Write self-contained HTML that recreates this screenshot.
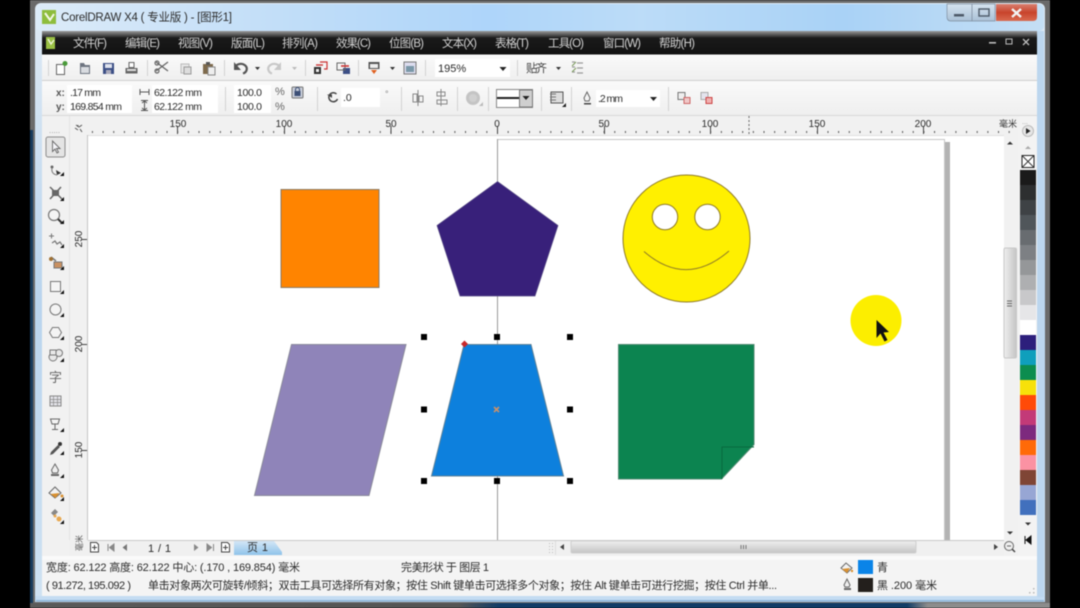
<!DOCTYPE html>
<html><head><meta charset="utf-8"><title>CorelDRAW X4</title>
<style>
html,body{margin:0;padding:0;background:#000;width:1080px;height:608px;overflow:hidden}
svg{display:block;filter:blur(.5px)}
text{font-family:"Liberation Sans","Noto Sans CJK SC",sans-serif;font-size:11px;fill:#2a2a2a}
.m text{fill:#d2d2d2;font-size:11.5px}
.i{fill:none;stroke:#555;stroke-width:1.2}
</style></head><body>
<svg width="1080" height="608" viewBox="0 0 1080 608" xmlns="http://www.w3.org/2000/svg">
<defs>
<linearGradient id="tb" x1="0" x2="1" y1="0" y2="0"><stop offset="0" stop-color="#dcebf8"/><stop offset=".2" stop-color="#c6e0f8"/><stop offset=".45" stop-color="#aed5fa"/><stop offset=".6" stop-color="#bcdcf8"/><stop offset=".8" stop-color="#a9d2f6"/><stop offset="1" stop-color="#c5dff5"/></linearGradient>
<linearGradient id="mb" x1="0" x2="0" y1="0" y2="1"><stop offset="0" stop-color="#999"/><stop offset=".3" stop-color="#1a1a1a"/><stop offset="1" stop-color="#121212"/></linearGradient>
<linearGradient id="tbar" x1="0" x2="0" y1="0" y2="1"><stop offset="0" stop-color="#fafafa"/><stop offset="1" stop-color="#efefef"/></linearGradient>
<linearGradient id="cl" x1="0" x2="0" y1="0" y2="1"><stop offset="0" stop-color="#d98070"/><stop offset=".5" stop-color="#c9442c"/><stop offset="1" stop-color="#d86a50"/></linearGradient>
<linearGradient id="btn" x1="0" x2="0" y1="0" y2="1"><stop offset="0" stop-color="#d6e4f0"/><stop offset="1" stop-color="#a9c0d6"/></linearGradient>
<linearGradient id="thumbH" x1="0" x2="0" y1="0" y2="1"><stop offset="0" stop-color="#efefef"/><stop offset="1" stop-color="#c4c4c4"/></linearGradient>
<linearGradient id="thumbV" x1="0" x2="1" y1="0" y2="0"><stop offset="0" stop-color="#efefef"/><stop offset="1" stop-color="#c4c4c4"/></linearGradient>
<linearGradient id="tab" x1="0" x2="0" y1="0" y2="1"><stop offset="0" stop-color="#d3e6f6"/><stop offset="1" stop-color="#8fc3ea"/></linearGradient>
<linearGradient id="bot" x1="0" x2="1" y1="0" y2="0"><stop offset="0" stop-color="#5a5a5a"/><stop offset=".42" stop-color="#555"/><stop offset=".46" stop-color="#123c66"/><stop offset=".86" stop-color="#123c66"/><stop offset=".88" stop-color="#8c8c8c"/><stop offset="1" stop-color="#8c8c8c"/></linearGradient>
<linearGradient id="side" x1="0" x2="0" y1="0" y2="1"><stop offset="0" stop-color="#dfeaf4"/><stop offset=".5" stop-color="#b9d4ee"/><stop offset="1" stop-color="#cfe2f2"/></linearGradient>
<pattern id="hm" x="497" y="0" width="10.66" height="10" patternUnits="userSpaceOnUse"><rect x="0" y="1" width="1" height="2" fill="#555"/></pattern>
<pattern id="vm" x="0" y="344" width="10" height="10.56" patternUnits="userSpaceOnUse"><rect x="1" y="0" width="2" height="1" fill="#555"/></pattern>
</defs>

<!-- outer frame -->
<rect x="0" y="0" width="1080" height="608" fill="#000"/>
<rect x="30" y="0" width="1020" height="608" fill="#6a6a6a"/>
<rect x="30" y="603" width="1020" height="5" fill="url(#bot)"/>
<rect x="30" y="130" width="3" height="473" fill="#163a5c"/>
<rect x="35" y="3" width="1010" height="599" rx="6" fill="url(#side)"/>
<rect x="36" y="4" width="1008" height="27" rx="5" fill="url(#tb)"/>
<rect x="35" y="596" width="1010" height="6" fill="#c4dcf2"/>
<rect x="36" y="600" width="1008" height="1.5" fill="#8fb6da"/>
<rect x="1037" y="31" width="7" height="566" fill="#bcd6ee"/>

<!-- title -->
<rect x="42" y="10" width="14" height="14" fill="#8ebd3c"/>
<path d="M45 13l5 7 4-6" fill="none" stroke="#f4f8e6" stroke-width="2"/>
<text x="61" y="21" style="font-size:11.5px;fill:#2c2c2c" textLength="171">CorelDRAW X4 ( 专业版 ) - [图形1]</text>
<path d="M947 4h48v17h-44q-4 0-4-4z" fill="url(#btn)" stroke="#7f8ea0" stroke-width=".7"/>
<line x1="972" y1="4" x2="972" y2="21" stroke="#7f8ea0" stroke-width=".8"/>
<rect x="954" y="14" width="10" height="2.5" fill="#4d5a68"/>
<rect x="979" y="9" width="10" height="7" fill="none" stroke="#4d5a68" stroke-width="1.4"/>
<path d="M996 4h41v13q0 4-4 4h-37z" fill="url(#cl)"/>
<path d="M1012 9l9 8M1021 9l-9 8" stroke="#f2f2f2" stroke-width="2.4"/>

<!-- menu bar -->
<rect x="42" y="31" width="995" height="23.5" fill="url(#mb)"/>
<rect x="46" y="37" width="9" height="12" fill="#9ac044"/>
<path d="M48 39l3 5 3-4" fill="none" stroke="#eef4d8" stroke-width="1.4"/>
<g class="m">
<text x="73" y="47" textLength="34">文件(F)</text>
<text x="125" y="47" textLength="35">编辑(E)</text>
<text x="178" y="47" textLength="35">视图(V)</text>
<text x="231" y="47" textLength="34">版面(L)</text>
<text x="282" y="47" textLength="36">排列(A)</text>
<text x="336" y="47" textLength="35">效果(C)</text>
<text x="389" y="47" textLength="35">位图(B)</text>
<text x="442" y="47" textLength="35">文本(X)</text>
<text x="495" y="47" textLength="34">表格(T)</text>
<text x="548" y="47" textLength="36">工具(O)</text>
<text x="603" y="47" textLength="38">窗口(W)</text>
<text x="659" y="47" textLength="36">帮助(H)</text>
</g>
<rect x="989" y="42" width="7" height="1.6" fill="#bbb"/>
<rect x="1006" y="39" width="6" height="5" fill="none" stroke="#bbb"/>
<path d="M1023 39l6 6M1029 39l-6 6" stroke="#bbb" stroke-width="1.3"/>

<!-- toolbars -->
<rect x="42" y="54.5" width="995" height="26" fill="url(#tbar)"/>
<rect x="42" y="80" width="995" height="1" fill="#d0d0d0"/>
<rect x="42" y="81" width="995" height="34" fill="url(#tbar)"/>
<rect x="42" y="115" width="995" height="1" fill="#d8d8d8"/>
<rect x="42" y="116" width="995" height="440" fill="#f1f1f1"/>

<!-- toolbar1 grips and separators -->
<g fill="#d2d2d2">
<rect x="48" y="60" width="1" height="16"/><rect x="147" y="60" width="1" height="16"/><rect x="224" y="60" width="1" height="16"/><rect x="305" y="60" width="1" height="16"/><rect x="358" y="60" width="1" height="16"/><rect x="425" y="60" width="1" height="16"/><rect x="517" y="60" width="1" height="16"/>
<rect x="225" y="87" width="1" height="24"/><rect x="317" y="87" width="1" height="24"/><rect x="401" y="87" width="1" height="24"/><rect x="457" y="87" width="1" height="24"/><rect x="488" y="87" width="1" height="24"/><rect x="541" y="87" width="1" height="24"/><rect x="571" y="87" width="1" height="24"/><rect x="668" y="87" width="1" height="24"/>
</g>
<!-- new -->
<path d="M56.500 64.500h8v10h-8z" fill="#fff" stroke="#666"/><circle cx="65" cy="63.500" r="2.500" fill="#4a9a3a"/>
<!-- open -->
<path d="M80 63h4l1 2h5v9H80z" fill="#6d7480"/><rect x="81" y="67" width="8" height="6" fill="#d8dbe0"/>
<!-- save -->
<rect x="103" y="63" width="11" height="11" fill="#3c4f86"/><rect x="105" y="64" width="7" height="4" fill="#dfe3ee"/><rect x="106" y="70" width="5" height="4" fill="#aab"/>
<!-- print -->
<path d="M129 62.500h5v5h-5z" fill="#fff" stroke="#666"/><rect x="125.500" y="68" width="12" height="5.500" fill="#666"/><rect x="127" y="69" width="9" height="2" fill="#ddd"/>
<!-- scissors -->
<path d="M156 62l12 9M168 62l-12 9" stroke="#666" stroke-width="1.300" fill="none"/><circle cx="157" cy="63" r="2" fill="none" stroke="#666" stroke-width="1.200"/><circle cx="157" cy="71" r="2" fill="none" stroke="#666" stroke-width="1.200"/>
<!-- copy -->
<rect x="181" y="64" width="8" height="9" fill="#e8e8e8" stroke="#bbb"/><rect x="184" y="67" width="7" height="7" fill="#ddd" stroke="#999"/>
<!-- paste -->
<rect x="203" y="64" width="10" height="10" fill="#7e6a4c"/><rect x="206" y="62" width="4" height="3" fill="#555"/><rect x="208" y="67" width="7" height="8" fill="#eee" stroke="#888"/>
<!-- undo -->
<path d="M235 67.500a6 5 0 1 1 8 6" fill="none" stroke="#555" stroke-width="2.200"/><path d="M234 62v8h7z" fill="#555"/>
<path d="M255 67h5l-2.500 3z" fill="#333"/>
<!-- redo -->
<path d="M280 67.500a6 5 0 1 0-8 6" fill="none" stroke="#c8c8c8" stroke-width="2.200"/><path d="M281 62v8h-7z" fill="#c8c8c8"/>
<path d="M292 67h5l-2.500 3z" fill="#bbb"/>
<!-- import/export -->
<rect x="314" y="67" width="7" height="7" fill="#333"/><rect x="316" y="69" width="3" height="3" fill="#eee"/><path d="M320 62h7v7h-3" fill="none" stroke="#c33" stroke-width="1.200"/><path d="M316 65h7" stroke="#c33" stroke-width="1.400"/>
<rect x="343" y="68" width="7" height="6" fill="#3c4f86"/><rect x="337" y="63" width="8" height="7" fill="none" stroke="#666"/><path d="M341 66h8" stroke="#c33" stroke-width="1.600"/>
<!-- app launcher -->
<rect x="368.500" y="62" width="11" height="7" fill="#555"/><rect x="370" y="64" width="8" height="4" fill="#eee"/><path d="M371 70h6l-3 4z" fill="#e06020"/>
<path d="M390 67h5l-2.500 3z" fill="#333"/>
<rect x="404" y="62" width="12" height="12" fill="#dde" stroke="#777"/><rect x="406" y="66" width="8" height="6" fill="#7a98a8"/>
<!-- zoom combo -->
<rect x="435" y="59" width="75" height="18" fill="#fff"/>
<text x="438" y="72">195%</text>
<path d="M499.500 67h7l-3.500 4z" fill="#222"/>
<text x="526" y="72" style="font-size:11.500px;fill:#444" textLength="21">贴齐</text>
<path d="M556 67h5l-2.500 3z" fill="#333"/>
<path d="M572 62h3M572 67h3M572 72h3M577 63h6M577 68h6M577 73h6" stroke="#999" stroke-width="1.200" fill="none"/>
<path d="M572 66l4-4M572 72l4-4" stroke="#7a9a5a" fill="none"/>

<!-- property bar -->
<rect x="67" y="85" width="65" height="14" fill="#fff"/><rect x="67" y="99" width="65" height="14" fill="#fff"/>
<rect x="152" y="85" width="66" height="14" fill="#fff"/><rect x="152" y="99" width="66" height="14" fill="#fff"/>
<rect x="234" y="85" width="37" height="14" fill="#fff"/><rect x="234" y="99" width="37" height="14" fill="#fff"/>
<rect x="341" y="88" width="39" height="19" fill="#fff"/>
<text x="56" y="96" style="font-weight:bold;font-size:10px;fill:#555">x:</text>
<text x="56" y="110" style="font-weight:bold;font-size:10px;fill:#555">y:</text>
<text x="70" y="96" style="font-size:10.500px" textLength="31">.17 mm</text>
<text x="70" y="110" style="font-size:10.500px" textLength="52">169.854 mm</text>
<path d="M140 92h9M140 89v6M149 89v6" stroke="#555" fill="none"/>
<path d="M144.500 101v9M141 100.500h7M141 110.500h7M142 103l2.500-2 2.500 2M142 108l2.500 2 2.500-2" stroke="#555" fill="none"/>
<text x="154" y="96" style="font-size:10.500px" textLength="48">62.122 mm</text>
<text x="154" y="110" style="font-size:10.500px" textLength="48">62.122 mm</text>
<text x="237" y="96" style="font-size:10.500px" textLength="25">100.0</text>
<text x="237" y="110" style="font-size:10.500px" textLength="25">100.0</text>
<text x="275" y="95" style="fill:#666">%</text><text x="275" y="110" style="fill:#666">%</text>
<rect x="292" y="87" width="11" height="11" rx="1" fill="#c7ccd8" stroke="#777"/><rect x="294.500" y="91" width="6" height="5" fill="#3c4f76"/><path d="M295.500 91v-1.500a2 2 0 0 1 4 0V91" fill="none" stroke="#3c4f76"/>
<path d="M336.500 94a4.500 4.500 0 1 0 1 5" fill="none" stroke="#444" stroke-width="1.500"/><path d="M327 94.500h5v3.500z" fill="#444"/>
<text x="343" y="101" style="font-size:10.500px">.0</text>
<text x="385" y="97" style="fill:#888;font-size:9px">°</text>
<path class="i" d="M413 94h4v8h-4zM419 96h4v6h-4zM418 90v16" style="stroke:#888;stroke-width:1"/>
<path class="i" d="M437 92h8v4h-8zM437 100h10v4h-10zM441 89v17" style="stroke:#888;stroke-width:1"/>
<circle cx="473" cy="98" r="7" fill="#c4c4c4"/><circle cx="473" cy="98" r="4" fill="#d0d0d0"/><path d="M479 106h4v-4z" fill="#bbb"/>
<rect x="496.500" y="89.500" width="36" height="18" fill="#fff" stroke="#888"/>
<rect x="497" y="97" width="22" height="2" fill="#222"/>
<rect x="519.500" y="90" width="13" height="17" fill="#cfcfcf" stroke="#777"/>
<path d="M522.500 96h7l-3.500 4z" fill="#222"/>
<rect x="551" y="92" width="12" height="11" fill="#ddd" stroke="#555"/><path d="M550 94h6M550 97h6M550 100h6" stroke="#777"/><path d="M562 107h4v-4z" fill="#222"/>
<path d="M587 92l3 6-1 3h-4l-1-3z" fill="none" stroke="#666"/><rect x="584" y="103" width="7" height="1.500" fill="#444"/>
<rect x="596" y="90" width="64" height="17" fill="#fff"/>
<text x="598" y="102" style="font-size:10.500px" textLength="25">.2 mm</text>
<path d="M650 97h7l-3.500 4z" fill="#222"/>
<rect x="678" y="92.500" width="7" height="7" fill="#eee" stroke="#777"/><rect x="684" y="97.500" width="6" height="6" fill="#f0c8c8" stroke="#c66"/>
<rect x="701" y="92.500" width="7" height="7" fill="#e4e4ee" stroke="#aaa"/><rect x="706" y="97.500" width="6" height="6" fill="#f0b0b0" stroke="#c44"/>

<!-- rulers -->
<rect x="88" y="116" width="916" height="20" fill="#f1f1f1"/>
<rect x="87" y="130" width="930" height="4" fill="url(#hm)"/>
<g fill="#444">
<rect x="177" y="126" width="1" height="8"/><rect x="284" y="126" width="1" height="8"/><rect x="390.500" y="126" width="1" height="8"/><rect x="497" y="126" width="1" height="8"/><rect x="604" y="126" width="1" height="8"/><rect x="710" y="126" width="1" height="8"/><rect x="817" y="126" width="1" height="8"/><rect x="923" y="126" width="1" height="8"/>
</g>
<path d="M749 116v20" stroke="#666" stroke-dasharray="2 2"/>
<text x="178" y="127" style="font-size:10px" text-anchor="middle">150</text>
<text x="284" y="127" style="font-size:10px" text-anchor="middle">100</text>
<text x="391" y="127" style="font-size:10px" text-anchor="middle">50</text>
<text x="497" y="127" style="font-size:10px" text-anchor="middle">0</text>
<text x="604" y="127" style="font-size:10px" text-anchor="middle">50</text>
<text x="710" y="127" style="font-size:10px" text-anchor="middle">100</text>
<text x="817" y="127" style="font-size:10px" text-anchor="middle">150</text>
<text x="923" y="127" style="font-size:10px" text-anchor="middle">200</text>
<text x="999" y="127" style="font-size:9px;fill:#333">毫米</text>
<text x="49" y="133" style="font-size:8px;fill:#999">.....</text>
<path d="M76 125l3 2 3-2M75 128l3 2M80 129l2 3M78 125v2" stroke="#555" fill="none"/>
<rect x="84" y="136" width="4" height="404" fill="url(#vm)"/>
<g transform="rotate(-90 78 239)"><text x="78" y="243" text-anchor="middle" style="font-size:10px">250</text></g>
<g transform="rotate(-90 78 344)"><text x="78" y="348" text-anchor="middle" style="font-size:10px">200</text></g>
<g transform="rotate(-90 78 450)"><text x="78" y="454" text-anchor="middle" style="font-size:10px">150</text></g>
<g fill="#444"><rect x="81" y="239" width="7" height="1"/><rect x="81" y="344" width="7" height="1"/><rect x="81" y="450" width="7" height="1"/></g>
<rect x="69" y="116" width="1" height="440" fill="#e4e4e4"/>

<!-- canvas -->
<rect x="88" y="135" width="916" height="405" fill="#fff"/>
<rect x="87" y="135" width="1" height="405" fill="#c4c4c4"/>
<rect x="88" y="135" width="916" height="1" fill="#e0e0e0"/>
<rect x="945" y="142" width="5" height="398" fill="#b3b3b3"/>
<path d="M497.500 139.500H944.500V540" fill="none" stroke="#c6c6c6"/>
<line x1="497.500" y1="139" x2="497.500" y2="540" stroke="#9a9a9a"/>

<!-- shapes -->
<rect x="281" y="189.500" width="98" height="98" fill="#ff8400" stroke="#8a7a66"/>
<path d="M497.500 181.500L558 225.500L535 296H460L437 225.500Z" fill="#38207a" stroke="#5a4e86" stroke-width=".7"/>
<circle cx="686.500" cy="238.500" r="63.500" fill="#fff000" stroke="#8e7a28"/>
<circle cx="665" cy="217" r="12.700" fill="#fff" stroke="#8e7a28"/>
<circle cx="707.500" cy="217" r="12.700" fill="#fff" stroke="#8e7a28"/>
<path d="M644 251.500Q686 288 729 251" fill="none" stroke="#8e7a28"/>
<path d="M291.500 344.500H406L369 495.500H254.500Z" fill="#8f84b9" stroke="#8a8a9a"/>
<path d="M464 344.500H531L563.500 476H431.500Z" fill="#0d80dd" stroke="#5e8298"/>
<path d="M618.500 344.500H754V444.500L721.500 479H618.500Z" fill="#0c8450" stroke="#4e8a70"/>
<path d="M722 479V447H754" fill="none" stroke="#086a3e"/>
<circle cx="876" cy="320.500" r="25.500" fill="#fcee00"/>
<path d="M876.500 320V338L880.500 333.500L884.500 341.500L887.500 340L883.500 332.500L889 332Z" fill="#111"/>

<!-- handles -->
<g fill="#000">
<rect x="421" y="334" width="6" height="6"/><rect x="494" y="334" width="6" height="6"/><rect x="567" y="334" width="6" height="6"/>
<rect x="421" y="406.500" width="6" height="6"/><rect x="567" y="406.500" width="6" height="6"/>
<rect x="421" y="478" width="6" height="6"/><rect x="494" y="478" width="6" height="6"/><rect x="567" y="478" width="6" height="6"/>
</g>
<path d="M464.500 340.500l3.500 3.500-3.500 3.500-3.500-3.500z" fill="#c8282a"/>
<path d="M494 407l5 5M499 407l-5 5" stroke="#c8906a" stroke-width="1.600"/>

<!-- toolbox -->
<rect x="46" y="137" width="19" height="20" rx="2" fill="#e4e4e4" stroke="#8a8a8a"/>
<path d="M52.500 141v10.500l2.500-2.500 2 4 1.500-.8-2-3.700h3.500z" fill="#f4f4f8" stroke="#666" stroke-width=".9"/>
<g>
<!-- shape -->
<circle cx="52" cy="167" r="1.500" fill="#666"/><path d="M52 168q-1 6 5 7" fill="none" stroke="#777"/><path d="M56 170l5 3-4 2z" fill="#333"/>
<!-- crop -->
<path d="M50 187l12 12M61 187l-11 12" stroke="#666" stroke-width="1.500"/><rect x="52" y="190" width="7" height="6" fill="#666"/>
<!-- zoom -->
<circle cx="54" cy="215" r="5.500" fill="#f4f4f4" stroke="#777" stroke-width="1.200"/><path d="M58 219l4 4" stroke="#333" stroke-width="2"/>
<!-- curve -->
<path d="M49 236h5M51.500 233.500v5" stroke="#777"/><path d="M52 243l3-2 2 3 3-2 2 3" fill="none" stroke="#777" stroke-width="1.200"/>
<!-- smart -->
<path d="M51 257l5 4" stroke="#777" stroke-width="1.500"/><rect x="54" y="262" width="8" height="6" fill="#c99060" stroke="#777"/><circle cx="51" cy="259" r="2" fill="#a07030"/>
<!-- rect -->
<rect x="50.500" y="281.500" width="10" height="10" fill="#f4f4f4" stroke="#777"/>
<!-- ellipse -->
<circle cx="55.500" cy="309.500" r="5.500" fill="#f4f4f4" stroke="#777"/>
<!-- polygon -->
<path d="M52.500 327.500h6l3 5-3 5h-6l-3-5z" fill="#f4f4f4" stroke="#777"/>
<!-- basic -->
<circle cx="53" cy="357" r="4" fill="#e8e8e8" stroke="#777"/><circle cx="59" cy="353" r="3.500" fill="#e8e8e8" stroke="#777"/><rect x="50" y="350" width="6" height="5" fill="#e8e8e8" stroke="#777"/>
<!-- text -->
<text x="49" y="382" style="font-size:13px;fill:#666">字</text>
<!-- table -->
<rect x="50" y="396" width="11" height="10" fill="#e4e4ea" stroke="#888"/><path d="M53.500 396v10M57.500 396v10M50 399.500h11M50 402.500h11" stroke="#888" stroke-width=".7"/>
<!-- glass -->
<path d="M50.500 419h9l-1.500 5h-6zM55 424v5M52 429.500h6" fill="#f4f4f4" stroke="#666"/>
<!-- dropper -->
<path d="M51 452l7-7 2 2-7 7-3 1z" fill="#555"/><circle cx="60" cy="444" r="2" fill="#333"/>
<!-- pen -->
<path d="M55 464l3.500 6-1 3h-5l-1-3z" fill="#eee" stroke="#666"/><rect x="51" y="474" width="8" height="2" fill="#666"/>
<!-- fill -->
<path d="M49 493l6-6 6 6-6 5z" fill="#f2f2f2" stroke="#666"/><path d="M50.500 494l9-1-4 5z" fill="#d99030"/><circle cx="62" cy="496" r="1.500" fill="#d99030"/>
<!-- interactive -->
<path d="M51 513l4-4 3 3-4 4z" fill="#888"/><circle cx="59" cy="519" r="2.500" fill="#e8a850"/><circle cx="55" cy="516" r="1.500" fill="#e8a850"/>
</g>
<g fill="#111">
<path d="M64 172v4h-4z"/><path d="M64 197v4h-4z"/><path d="M64 220v4h-4z"/><path d="M64 244v4h-4z"/><path d="M64 266v4h-4z"/><path d="M64 290v4h-4z"/><path d="M64 313v4h-4z"/><path d="M64 336v4h-4z"/><path d="M64 358v4h-4z"/><path d="M64 428v4h-4z"/><path d="M64 451v4h-4z"/><path d="M64 474v4h-4z"/><path d="M64 497v4h-4z"/><path d="M64 520v4h-4z"/>
</g>

<!-- vertical scrollbar -->
<rect x="1004" y="135" width="15" height="405" fill="#f1f1f1"/>
<path d="M1007 144.500h6l-3-3z" fill="#333"/>
<path d="M1007 531.500h6l-3 3z" fill="#333"/>
<rect x="1004" y="248" width="12.500" height="110" rx="1.500" fill="url(#thumbV)" stroke="#c8c8c8"/>
<path d="M1007 301h5M1007 303.500h5M1007 306h5" stroke="#666"/>

<!-- palette -->
<rect x="1019" y="116" width="18" height="440" fill="#f3f3f3"/>
<text x="1022" y="124" style="font-size:7px;fill:#999">...</text>
<circle cx="1028" cy="131" r="5.500" fill="#e6e6e6" stroke="#bbb"/><path d="M1026 128l4.500 3-4.500 3z" fill="#222"/>
<path d="M1025 149h6l-3-3z" fill="#aaa"/>
<rect x="1022" y="155.500" width="12" height="12" fill="#fff" stroke="#222"/><path d="M1022 155.500l12 12M1034 155.500l-12 12" stroke="#333" stroke-width=".9"/>
<g>
<rect x="1020" y="170" width="16" height="15" fill="#1a1a1a"/>
<rect x="1020" y="185" width="16" height="15" fill="#2d2f30"/>
<rect x="1020" y="200" width="16" height="15" fill="#3e4245"/>
<rect x="1020" y="215" width="16" height="15" fill="#50565a"/>
<rect x="1020" y="230" width="16" height="15" fill="#686c70"/>
<rect x="1020" y="245" width="16" height="15" fill="#7d8084"/>
<rect x="1020" y="260" width="16" height="15" fill="#959799"/>
<rect x="1020" y="275" width="16" height="15" fill="#aeafb1"/>
<rect x="1020" y="290" width="16" height="15" fill="#c8c8ca"/>
<rect x="1020" y="305" width="16" height="15" fill="#e6e6e8"/>
<rect x="1020" y="320" width="16" height="15" fill="#ffffff"/>
<rect x="1020" y="335" width="16" height="15" fill="#2d1f7c"/>
<rect x="1020" y="350" width="16" height="15" fill="#0f9fbc"/>
<rect x="1020" y="365" width="16" height="15" fill="#0c8d4f"/>
<rect x="1020" y="380" width="16" height="15" fill="#f7e10a"/>
<rect x="1020" y="395" width="16" height="15" fill="#ff4a08"/>
<rect x="1020" y="410" width="16" height="15" fill="#c33a78"/>
<rect x="1020" y="425" width="16" height="15" fill="#7d2a7e"/>
<rect x="1020" y="440" width="16" height="15" fill="#ff6a08"/>
<rect x="1020" y="455" width="16" height="15" fill="#fb92a3"/>
<rect x="1020" y="470" width="16" height="15" fill="#7f4535"/>
<rect x="1020" y="485" width="16" height="15" fill="#97a6d4"/>
<rect x="1020" y="500" width="16" height="15" fill="#4170bd"/>
</g>
<path d="M1025 522.500h6l-3 3z" fill="#333"/>
<path d="M1025 536v8M1031 536v8l-5-4z" fill="#111" stroke="#111"/>

<!-- page navigator + h scrollbar -->
<rect x="69" y="540" width="935" height="16" fill="#f0f0f0"/>
<rect x="88" y="540" width="916" height="1" fill="#c8c8c8"/>
<text x="74" y="551" style="font-size:8px;fill:#555" transform="rotate(-90 78 547)">毫米</text>
<path d="M90.500 542.500h6l2 2v7.500h-8z" fill="#fff" stroke="#444"/><path d="M92 547.500h5M94.500 545v5" stroke="#444"/>
<path d="M108 544v7M114 544v7l-4.500-3.500z" fill="#888" stroke="#888"/>
<path d="M127 544v7l-4.500-3.500z" fill="#777"/>
<text x="148" y="552" style="font-size:11px" textLength="23">1 / 1</text>
<path d="M194 544v7l4.500-3.500z" fill="#888"/>
<path d="M207 544v7l4.500-3.500zM213.500 544v7" fill="#888" stroke="#888"/>
<path d="M221.500 542.500h6l2 2v7.500h-8z" fill="#fff" stroke="#444"/><path d="M223 547.500h5M225.500 545v5" stroke="#444"/>
<path d="M234 541H274L282 552V555H234Z" fill="url(#tab)"/>
<text x="247" y="551" style="font-size:11px" textLength="21">页 1</text>
<path d="M549.500 543v10M552.500 543v10" stroke="#bbb" stroke-dasharray="1 2"/>
<rect x="555" y="541" width="1" height="14" fill="#ddd"/>
<path d="M564 544v6l-4-3z" fill="#444"/>
<rect x="571" y="541" width="345" height="12" rx="1.500" fill="url(#thumbH)" stroke="#cfcfcf"/>
<path d="M741 545v4M743.500 545v4M746 545v4" stroke="#777"/>
<path d="M994 544v6l4-3z" fill="#444"/>
<circle cx="1009" cy="546" r="4.500" fill="#eee" stroke="#666"/><path d="M1012 549l3 3" stroke="#444" stroke-width="1.500"/><path d="M1007 546h4" stroke="#666"/>

<!-- status bar -->
<rect x="42" y="556" width="995" height="40" fill="#f4f4f4"/>
<rect x="42" y="556" width="995" height="4" fill="#fafafa"/>
<text x="46" y="571" style="font-size:11px" textLength="254">宽度: 62.122 高度: 62.122 中心: (.170 , 169.854) 毫米</text>
<text x="401" y="571" style="font-size:11px" textLength="88">完美形状 于 图层 1</text>
<text x="46" y="589" style="font-size:11px" textLength="85">( 91.272, 195.092 )</text>
<text x="148" y="589" style="font-size:11px" textLength="629">单击对象两次可旋转/倾斜；双击工具可选择所有对象；按住 Shift 键单击可选择多个对象；按住 Alt 键单击可进行挖掘；按住 Ctrl 并单...</text>
<path d="M841 568l5-5 6 5-5 5z" fill="#f2f2f2" stroke="#666"/><path d="M842 569l8-1-3 5z" fill="#d99030"/><circle cx="852" cy="571" r="1.200" fill="#d99030"/>
<path d="M847 579l3 6-1 2h-4l-1-2z" fill="#eee" stroke="#666"/><rect x="844" y="588" width="7" height="2" fill="#666"/>
<rect x="858" y="560" width="15" height="14" fill="#0a84e8"/>
<rect x="858" y="578" width="15" height="14" fill="#231f1c"/>
<text x="877" y="571" style="font-size:11px">青</text>
<text x="877" y="589" style="font-size:11px" textLength="60">黑 .200 毫米</text>
<g fill="#bbb"><rect x="1033" y="592" width="1.500" height="1.500"/><rect x="1029" y="592" width="1.500" height="1.500"/><rect x="1033" y="588" width="1.500" height="1.500"/></g>
</svg>
</body></html>
